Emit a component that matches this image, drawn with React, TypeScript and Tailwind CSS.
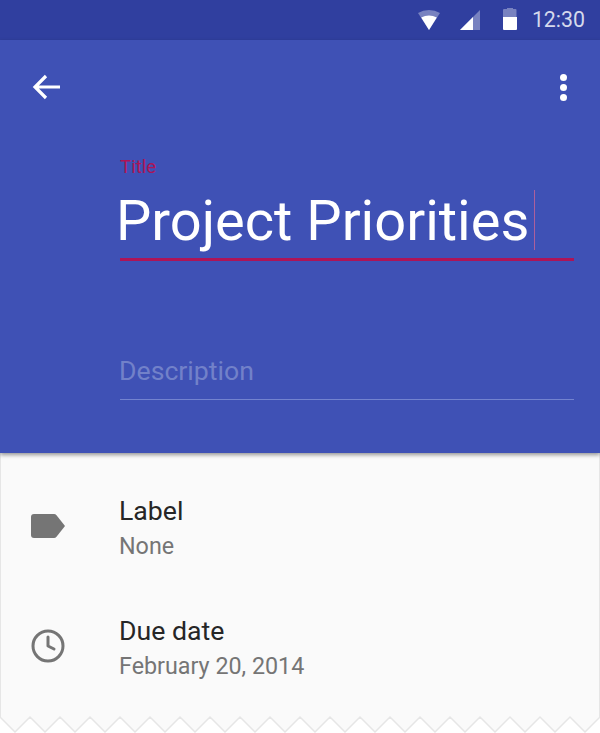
import { Clock } from "lucide-react";

const zigzagPoints = Array.from({ length: 22 }, (_, i) => `L${i * 30 - 15} 732 L${i * 30} 717`).join(" ");

function StatusBar() {
  return (
    <div className="flex h-10 items-center justify-end bg-[#303f9f] pr-[15px] text-[#d5d9ec]">
      <svg width="24" height="24" viewBox="0 0 24 24" className="mr-[18px]">
        <path d="M12 22 1 5Q6 2 12 2t11 3Z" fill="#fff" fillOpacity=".35" />
        <path d="M12 22 4.200 9.500Q8 7.500 12 7.500t7.800 2Z" fill="#fff" />
      </svg>
      <svg width="22" height="22" viewBox="0 0 22 22" className="mr-[21px]">
        <path d="M1 21 21 1v20Z" fill="#fff" fillOpacity=".35" />
        <path d="M1 21 14 8v13Z" fill="#fff" />
      </svg>
      <svg width="16" height="24" viewBox="0 0 16 24" className="mr-[14px]">
        <path d="M5 0h6v2h2.500q1 0 1 1v8H1V3q0-1 1-1h3Z" transform="translate(0 -1)" fill="#fff" fillOpacity=".35" />
        <path d="M1 9h14v12q0 1-1 1H2q-1 0-1-1Z" fill="#fff" />
      </svg>
      <span className="text-[21.33px] leading-none">12:30</span>
    </div>
  );
}

function DetailRow({ icon, title, value }: { icon: React.ReactNode; title: string; value: string }) {
  return (
    <div className="flex h-[120px] items-center">
      <div className="flex w-[118px] shrink-0 justify-center pr-[24px]">{icon}</div>
      <div className="pt-[5px]">
        <div className="text-[26.67px] leading-[34px] text-[#262626]">{title}</div>
        <div className="text-[23.3px] leading-[36px] text-[#757575]">{value}</div>
      </div>
    </div>
  );
}

export default function App() {
  return (
    <div className="relative h-[733px] w-[600px] overflow-hidden bg-white font-['Roboto',sans-serif]">
      <StatusBar />
      <header className="relative z-10 h-[413px] bg-[#3f51b5] shadow-[0_2px_4px_rgba(0,0,0,0.4)]">
        <div className="flex h-[94px] items-center justify-between pl-[32px] pr-[33px]">
          <svg width="28" height="26" viewBox="0 0 28 26" fill="none" stroke="#fff" strokeWidth="3.200">
            <path d="M28 13H3M14 2 3 13l11 11" />
          </svg>
          <div className="flex flex-col gap-[3px]">
            <span className="size-[7px] rounded-full bg-white" />
            <span className="size-[7px] rounded-full bg-white" />
            <span className="size-[7px] rounded-full bg-white" />
          </div>
        </div>
        <div className="pl-[120px] pr-[26px]">
          <div className="mt-[21px] text-[18.67px] leading-[24px] text-[#ad1457]">Title</div>
          <div className="flex h-[82px] items-center border-b-[3px] border-[#ad1457]">
            <span className="ml-[-4px] mt-[5px] text-[56px] leading-none text-white">Project Priorities</span>
            <span className="ml-[5px] mt-[11px] h-[60px] w-px self-start bg-[#ad5f9c]" />
          </div>
          <div className="mt-[93px] border-b border-[#7383cf] pb-[11px] text-[26.67px] leading-[34px] text-[#7281c9]">
            <span className="ml-[-1px]">Description</span>
          </div>
        </div>
      </header>
      <main className="border-x border-[#e6e6e6] bg-[#fafafa] pt-[13px]">
        <DetailRow
          icon={
            <svg width="34" height="24" viewBox="0 0 34 24">
              <path d="M3 0h20q1.500 0 2.500 1.200L34 12l-8.500 10.800q-1 1.200-2.500 1.200H3q-3 0-3-3V3q0-3 3-3Z" fill="#757575" />
            </svg>
          }
          title="Label"
          value="None"
        />
        <DetailRow icon={<Clock size={36} strokeWidth={2} color="#757575" className="mr-[1px]" />} title="Due date" value="February 20, 2014" />
        <div className="h-[40px]" />
      </main>
      <svg width="600" height="733" viewBox="0 0 600 733" className="pointer-events-none absolute inset-0">
        <path d={`M-15 740 ${zigzagPoints} L630 740Z`} fill="#fff" stroke="#e6e6e6" strokeWidth="1.500" />
      </svg>
    </div>
  );
}
